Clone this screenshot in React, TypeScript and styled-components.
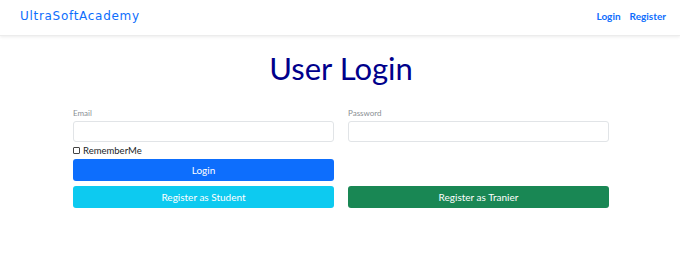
import styled, { createGlobalStyle } from "styled-components"

const GlobalStyle = createGlobalStyle`
    * {
        box-sizing: border-box;
    }

    body {
        margin: 0;
        background: #ffffff;
        font-family: "Lato", "Noto Sans", sans-serif;
        color: #212529;
    }
`

type Variant = "primary" | "info" | "success"

const buttonColors: Record<Variant, string> = {
    primary: "#0d6efd",
    info: "#0dcaf0",
    success: "#198754",
}

export default function App() {
    return (
        <>
            <GlobalStyle />
            <NavBar>
                <Brand href="#">UltraSoftAcademy</Brand>
                <NavLinks>
                    <NavLink href="#">Login</NavLink>
                    <NavLink href="#">Register</NavLink>
                </NavLinks>
            </NavBar>
            <Main>
                <Title>User Login</Title>
                <Form onSubmit={(e) => e.preventDefault()}>
                    <Column>
                        <Field>
                            <Label htmlFor="email">Email</Label>
                            <Input id="email" type="email" />
                        </Field>
                        <CheckRow>
                            <CheckBox type="checkbox" id="remember" />
                            <CheckLabel htmlFor="remember">RememberMe</CheckLabel>
                        </CheckRow>
                        <Button type="submit" $variant="primary">Login</Button>
                    </Column>
                    <Column>
                        <Field>
                            <Label htmlFor="password">Password</Label>
                            <Input id="password" type="password" />
                        </Field>
                    </Column>
                    <Button type="button" $variant="info">Register as Student</Button>
                    <Button type="button" $variant="success">Register as Tranier</Button>
                </Form>
            </Main>
        </>
    )
}

const NavBar = styled.nav`
    height: 36px;
    display: flex;
    align-items: center;
    justify-content: space-between;
    padding: 0 14px 0 20px;
    background: #ffffff;
    border-bottom: 1px solid #ececec;
    box-shadow: 0 1px 3px rgba(0, 0, 0, 0.08);
`

const Brand = styled.a`
    font-family: "DejaVu Sans", sans-serif;
    font-size: 12px;
    letter-spacing: 0.7px;
    color: #0d6efd;
    text-decoration: none;
    margin-top: -3px;
`

const NavLinks = styled.div`
    display: flex;
    gap: 9px;
    margin-top: -3px;
`

const NavLink = styled.a`
    font-size: 10px;
    font-weight: 700;
    color: #0d6efd;
    text-decoration: none;
`

const Main = styled.main`
    width: 536px;
    margin: 0 0 0 calc(50% - 267px);
    padding-top: 12px;
`

const Title = styled.h1`
    margin: 0 0 20px;
    text-align: center;
    font-size: 31px;
    font-weight: 400;
    line-height: 40px;
    color: #00008b;
`

const Form = styled.form`
    display: grid;
    grid-template-columns: 1fr 1fr;
    column-gap: 14px;
    row-gap: 5px;
`

const Column = styled.div`
    display: flex;
    flex-direction: column;
`

const Field = styled.div`
    display: flex;
    flex-direction: column;
`

const Label = styled.label`
    font-size: 8px;
    line-height: 10px;
    color: #8a8f94;
    margin-bottom: 3px;
`

const Input = styled.input`
    height: 21px;
    border: 1px solid #e1e4e7;
    border-radius: 3px;
    padding: 0 6px;
    font-size: 10px;
    outline: none;
`

const CheckRow = styled.div`
    display: flex;
    align-items: center;
    gap: 3px;
    height: 12px;
    margin: 2px 0 3px;
`

const CheckBox = styled.input`
    appearance: none;
    width: 7px;
    height: 7px;
    margin: 0;
    border: 1px solid #444;
    border-radius: 1px;
    background: #ffffff;
`

const CheckLabel = styled.label`
    font-size: 9.5px;
    color: #212529;
`

const Button = styled.button<{ $variant: Variant }>`
    height: 22px;
    border: none;
    border-radius: 3px;
    background: ${({ $variant }) => buttonColors[$variant]};
    color: #ffffff;
    font-family: "Lato", "Noto Sans", sans-serif;
    font-size: 10px;
    cursor: pointer;
`
